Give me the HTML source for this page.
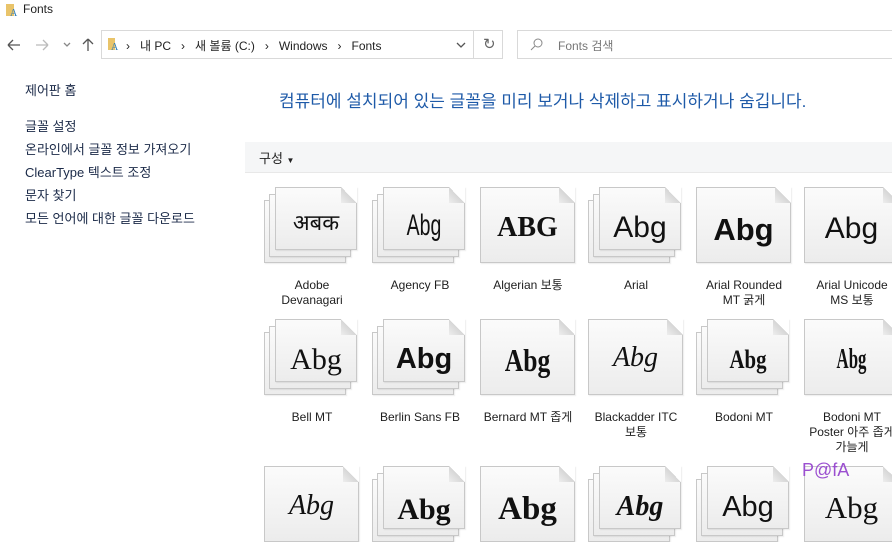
<!DOCTYPE html>
<html><head><meta charset="utf-8"><style>
*{margin:0;padding:0;box-sizing:border-box}
body{width:892px;height:529px;overflow:hidden;background:#fff;font-family:"Liberation Sans","Noto Sans CJK KR",sans-serif;font-size:12px;color:#1e1e1e;position:relative}
.a{position:absolute;white-space:nowrap}
.left{color:#1b2a48;font-size:13px}
.pg{position:absolute;background:linear-gradient(#fbfbfb,#ececec);border:1px solid #c8c8c8;box-shadow:1px 1px 1px rgba(0,0,0,.08)}
.pg:after{content:"";position:absolute;right:-1px;top:-1px;width:16px;height:16px;background:linear-gradient(225deg,#fff 50%,#d6d6d6 50%,#eee 100%)}
.pv{position:absolute;text-align:center;color:#111;line-height:1}
.lb{position:absolute;width:108px;text-align:center;font-size:12px;line-height:15px;color:#1e1e1e}
</style></head><body>
<svg class="a" style="left:5px;top:3px" width="14" height="14"><rect x="1" y="1" width="8" height="12" fill="#e9c46a"/><text x="5" y="13" font-size="10" fill="#2a7ab8" font-family="Liberation Serif">A</text></svg>
<div class="a" style="left:23px;top:2px;font-size:12px">Fonts</div>
<svg class="a" style="left:6px;top:37px" width="90" height="16" stroke="#555" fill="none" stroke-width="1.3">
<path d="M2 8h12M2 8l5-5M2 8l5 5"/><path d="M30 8h12M42 8l-5-5M42 8l-5 5" stroke="#bbb"/><path d="M58 6l3 3 3-3" stroke="#888"/><path d="M82 14V2M82 2l-5 5M82 2l5 5"/></svg>
<div class="a" style="left:101px;top:30px;width:402px;height:29px;border:1px solid #d9d9d9"></div>
<div class="a" style="left:473px;top:30px;width:1px;height:29px;background:#d9d9d9"></div>
<svg class="a" style="left:107px;top:37px" width="14" height="14"><rect x="1" y="1" width="7" height="12" fill="#e9c46a"/><text x="4" y="13" font-size="10" fill="#2a7ab8" font-family="Liberation Serif">A</text></svg>
<div class="a" style="left:126px;top:37px;font-size:12px;color:#222">›&nbsp;&nbsp; 내 PC &nbsp;&nbsp;›&nbsp;&nbsp; 새 볼륨 (C:) &nbsp;&nbsp;›&nbsp;&nbsp; Windows &nbsp;&nbsp;›&nbsp;&nbsp; Fonts</div>
<svg class="a" style="left:455px;top:40px" width="12" height="10"><path d="M2 3l4 4 4-4" stroke="#555" fill="none" stroke-width="1.3"/></svg>
<div class="a" style="left:483px;top:35px;font-size:15px;color:#666">↻</div>
<div class="a" style="left:517px;top:30px;width:380px;height:29px;border:1px solid #d9d9d9"></div>
<svg class="a" style="left:530px;top:37px" width="14" height="14"><circle cx="8" cy="6" r="4" stroke="#888" fill="none"/><path d="M5 9l-4 4" stroke="#888"/></svg>
<div class="a" style="left:558px;top:37px;color:#777">Fonts 검색</div>
<div class="a left" style="left:25px;top:80px">제어판 홈</div>
<div class="a left" style="left:25px;top:116px">글꼴 설정</div>
<div class="a left" style="left:25px;top:139px">온라인에서 글꼴 정보 가져오기</div>
<div class="a left" style="left:25px;top:162px">ClearType 텍스트 조정</div>
<div class="a left" style="left:25px;top:185px">문자 찾기</div>
<div class="a left" style="left:25px;top:208px">모든 언어에 대한 글꼴 다운로드</div>
<div class="a" style="left:279px;top:87px;font-size:17px;color:#1e5aa8">컴퓨터에 설치되어 있는 글꼴을 미리 보거나 삭제하고 표시하거나 숨깁니다.</div>
<div class="a" style="left:245px;top:142px;width:647px;height:31px;background:#f5f6f7;border-bottom:1px solid #e8e8e8"></div>
<div class="a" style="left:259px;top:148px;color:#222;font-size:13px">구성 <span style="font-size:8px">▼</span></div>

<div class="pg" style="left:264px;top:200px;width:82px;height:63px"></div><div class="pg" style="left:269px;top:194px;width:82px;height:63px"></div><div class="pg" style="left:275px;top:187px;width:82px;height:63px"></div>
<div class="pv" style="left:275px;top:212px;width:82px;font-size:22px;font-family:'Liberation Serif',serif">अबक</div>
<div class="lb" style="left:258px;top:278px">Adobe<br>Devanagari</div>

<div class="pg" style="left:372px;top:200px;width:82px;height:63px"></div><div class="pg" style="left:377px;top:194px;width:82px;height:63px"></div><div class="pg" style="left:383px;top:187px;width:82px;height:63px"></div>
<div class="pv" style="left:383px;top:211px;width:82px;font-size:30px;transform:scaleX(.65);font-family:'Liberation Sans Narrow','Liberation Sans',sans-serif">Abg</div>
<div class="lb" style="left:366px;top:278px">Agency FB</div>

<div class="pg" style="left:480px;top:187px;width:95px;height:76px"></div>
<div class="pv" style="left:480px;top:214px;width:95px;font-size:28px;font-weight:bold;font-family:'Liberation Serif',serif">ABG</div>
<div class="lb" style="left:474px;top:278px">Algerian 보통</div>

<div class="pg" style="left:588px;top:200px;width:82px;height:63px"></div><div class="pg" style="left:593px;top:194px;width:82px;height:63px"></div><div class="pg" style="left:599px;top:187px;width:82px;height:63px"></div>
<div class="pv" style="left:599px;top:213px;width:82px;font-size:30px">Abg</div>
<div class="lb" style="left:582px;top:278px">Arial</div>

<div class="pg" style="left:696px;top:187px;width:95px;height:76px"></div>
<div class="pv" style="left:696px;top:214px;width:95px;font-size:31px;font-weight:bold">Abg</div>
<div class="lb" style="left:690px;top:278px">Arial Rounded<br>MT 굵게</div>

<div class="pg" style="left:804px;top:187px;width:95px;height:76px"></div>
<div class="pv" style="left:804px;top:214px;width:95px;font-size:30px">Abg</div>
<div class="lb" style="left:798px;top:278px">Arial Unicode<br>MS 보통</div>

<div class="pg" style="left:264px;top:332px;width:82px;height:63px"></div><div class="pg" style="left:269px;top:326px;width:82px;height:63px"></div><div class="pg" style="left:275px;top:319px;width:82px;height:63px"></div>
<div class="pv" style="left:275px;top:345px;width:82px;font-size:30px;font-family:'Liberation Serif',serif">Abg</div>
<div class="lb" style="left:258px;top:410px">Bell MT</div>

<div class="pg" style="left:372px;top:332px;width:82px;height:63px"></div><div class="pg" style="left:377px;top:326px;width:82px;height:63px"></div><div class="pg" style="left:383px;top:319px;width:82px;height:63px"></div>
<div class="pv" style="left:383px;top:345px;width:82px;font-size:29px;font-weight:bold">Abg</div>
<div class="lb" style="left:366px;top:410px">Berlin Sans FB</div>

<div class="pg" style="left:480px;top:319px;width:95px;height:76px"></div>
<div class="pv" style="left:480px;top:344px;width:95px;font-size:32px;font-weight:bold;transform:scaleX(.8);font-family:'Liberation Serif',serif">Abg</div>
<div class="lb" style="left:474px;top:410px">Bernard MT 좁게</div>

<div class="pg" style="left:588px;top:319px;width:95px;height:76px"></div>
<div class="pv" style="left:588px;top:344px;width:95px;font-size:28px;font-style:italic;font-family:'Liberation Serif',serif">Abg</div>
<div class="lb" style="left:582px;top:410px">Blackadder ITC<br>보통</div>

<div class="pg" style="left:696px;top:332px;width:82px;height:63px"></div><div class="pg" style="left:701px;top:326px;width:82px;height:63px"></div><div class="pg" style="left:707px;top:319px;width:82px;height:63px"></div>
<div class="pv" style="left:707px;top:347px;width:82px;font-size:26px;font-weight:bold;transform:scaleX(.8);font-family:'Liberation Serif',serif">Abg</div>
<div class="lb" style="left:690px;top:410px">Bodoni MT</div>

<div class="pg" style="left:804px;top:319px;width:95px;height:76px"></div>
<div class="pv" style="left:804px;top:346px;width:95px;font-size:28px;font-weight:bold;transform:scaleX(.6);font-family:'Liberation Serif',serif">Abg</div>
<div class="lb" style="left:798px;top:410px">Bodoni MT<br>Poster 아주 좁게<br>가늘게</div>

<div class="pg" style="left:264px;top:466px;width:95px;height:76px"></div>
<div class="pv" style="left:264px;top:492px;width:95px;font-size:28px;font-style:italic;font-family:'Liberation Serif',serif;font-weight:300">Abg</div>
<div class="pg" style="left:372px;top:479px;width:82px;height:63px"></div><div class="pg" style="left:377px;top:473px;width:82px;height:63px"></div><div class="pg" style="left:383px;top:466px;width:82px;height:63px"></div>
<div class="pv" style="left:383px;top:495px;width:82px;font-size:30px;font-weight:bold;font-family:'Liberation Serif',serif">Abg</div>
<div class="pg" style="left:480px;top:466px;width:95px;height:76px"></div>
<div class="pv" style="left:480px;top:493px;width:95px;font-size:33px;font-weight:bold;font-family:'Liberation Serif',serif">Abg</div>
<div class="pg" style="left:588px;top:479px;width:82px;height:63px"></div><div class="pg" style="left:593px;top:473px;width:82px;height:63px"></div><div class="pg" style="left:599px;top:466px;width:82px;height:63px"></div>
<div class="pv" style="left:599px;top:493px;width:82px;font-size:28px;font-style:italic;font-weight:bold;font-family:'Liberation Serif',serif">Abg</div>
<div class="pg" style="left:696px;top:479px;width:82px;height:63px"></div><div class="pg" style="left:701px;top:473px;width:82px;height:63px"></div><div class="pg" style="left:707px;top:466px;width:82px;height:63px"></div>
<div class="pv" style="left:707px;top:493px;width:82px;font-size:29px">Abg</div>
<div class="pg" style="left:804px;top:466px;width:95px;height:76px"></div>
<div class="pv" style="left:804px;top:492px;width:95px;font-size:31px;font-family:'Liberation Serif',serif">Abg</div>
<div class="a" style="left:802px;top:460px;font-size:18px;color:#9b4fd0">P@fA</div>
</body></html>
